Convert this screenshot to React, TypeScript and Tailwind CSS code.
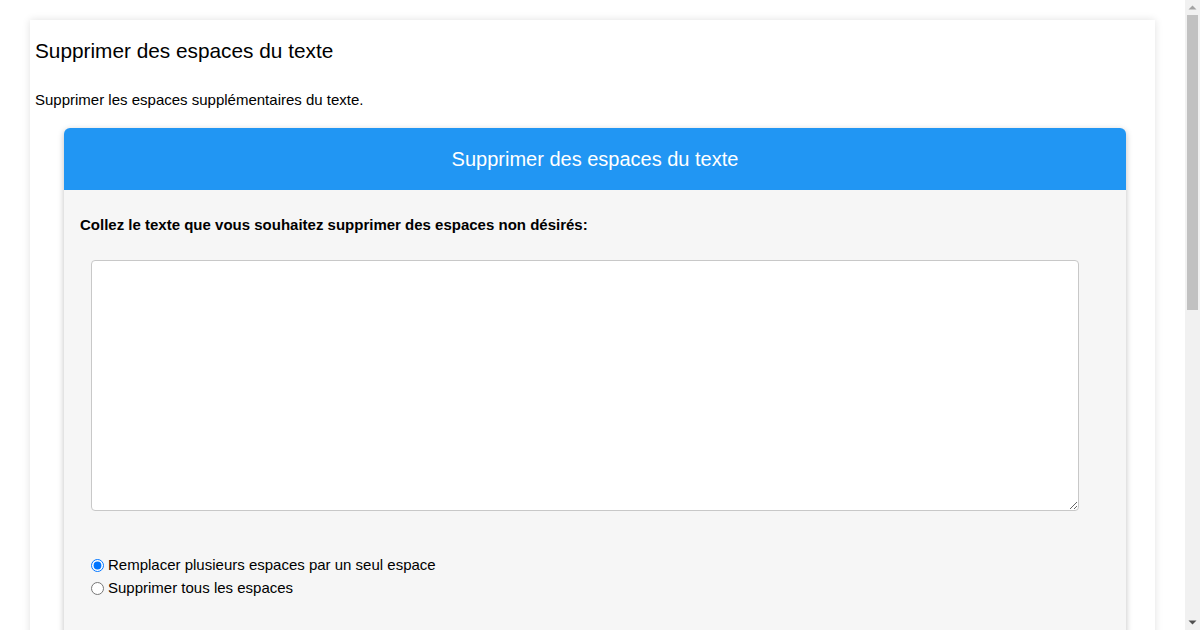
import { useState } from 'react'

function Scrollbar() {
  return (
    <div className="fixed top-0 right-0 flex h-screen w-[15px] flex-col items-center bg-[#f1f1f1]">
      <svg width="15" height="15" viewBox="0 0 15 15" className="shrink-0">
        <path d="M3.5 9.5 L7.5 5.5 L11.5 9.5 Z" fill="#a3a3a3" />
      </svg>
      <div className="h-[295px] w-[11px] bg-[#c1c1c1]" />
      <div className="flex-1" />
      <svg width="15" height="15" viewBox="0 0 15 15" className="shrink-0">
        <path d="M3.5 5.5 L11.5 5.5 L7.5 9.5 Z" fill="#505050" />
      </svg>
    </div>
  )
}

export default function App() {
  const [mode, setMode] = useState('multi')
  const [texte, setTexte] = useState('')

  return (
    <div className="min-h-screen bg-white pt-[20px] pb-[40px] font-['Liberation_Sans',Arial,sans-serif] text-black">
      <div className="ml-[30px] w-[1125px] bg-white px-[5px] pb-[40px] shadow-[0_0_8px_rgba(0,0,0,0.12)]">
        <h1 className="pt-[19px] text-[20.8px] leading-[24px]">Supprimer des espaces du texte</h1>
        <p className="mt-[28px] text-[15px] leading-[17px]">Supprimer les espaces supplémentaires du texte.</p>

        <div className="mt-[20px] ml-[29px] w-[1062px] overflow-hidden rounded-t-[6px] bg-[#f6f6f6] shadow-[0_2px_6px_rgba(0,0,0,0.25)]">
          <div className="flex h-[62px] items-center justify-center bg-[#2196f3] text-[20px] text-white">
            Supprimer des espaces du texte
          </div>

          <div className="px-[16px] pt-[26px] pb-[40px]">
            <label className="block text-[15px] font-bold leading-[17px]">
              Collez le texte que vous souhaitez supprimer des espaces non désirés:
            </label>

            <textarea
              value={texte}
              onChange={e => setTexte(e.target.value)}
              className="mt-[27px] ml-[11px] block h-[251px] w-[988px] rounded-[4px] border border-[#c8c8c8] bg-white p-2 text-[15px]"
            />

            <div className="mt-[43px] ml-[11px] text-[15px]">
              <label className="flex h-[23px] items-center">
                <input type="radio" name="mode" checked={mode === 'multi'} onChange={() => setMode('multi')}
                  className="m-0 mr-[4px] h-[13px] w-[13px]" />
                Remplacer plusieurs espaces par un seul espace
              </label>
              <label className="flex h-[23px] items-center">
                <input type="radio" name="mode" checked={mode === 'all'} onChange={() => setMode('all')}
                  className="m-0 mr-[4px] h-[13px] w-[13px]" />
                Supprimer tous les espaces
              </label>
            </div>

            <button className="mt-[60px] ml-[11px] rounded-[4px] bg-[#2196f3] px-5 py-3 text-[15px] text-white">
              Supprimer les espaces
            </button>

            <p className="mt-[30px] ml-[11px] text-[15px] font-bold">Résultat:</p>
            <textarea readOnly
              className="mt-[16px] ml-[11px] block h-[251px] w-[988px] rounded-[4px] border border-[#c8c8c8] bg-white p-2 text-[15px]"
            />
            <button className="mt-[20px] ml-[11px] rounded-[4px] bg-[#2196f3] px-5 py-3 text-[15px] text-white">
              Copier
            </button>
          </div>
        </div>
      </div>
      <Scrollbar />
    </div>
  )
}
